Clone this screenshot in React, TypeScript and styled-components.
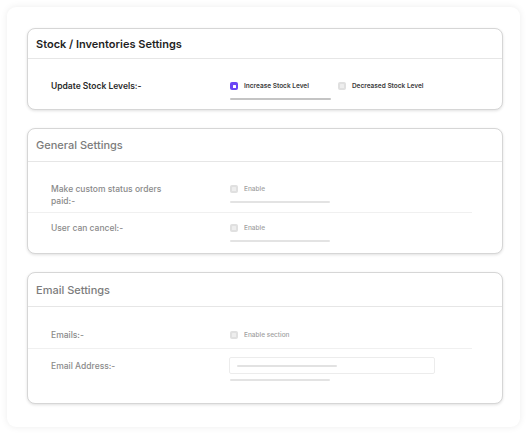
import React from "react";
import styled, { createGlobalStyle } from "styled-components";

const Global = createGlobalStyle`
  html, body { margin: 0; padding: 0; background: #ffffff; }
  body { font-family: Inter, "Noto Sans", sans-serif; }
  * { box-sizing: border-box; }
`;

const Page = styled.div`
  padding: 7px 10px 10px 7px;
`;

const OuterCard = styled.div`
  width: 513px;
  height: 420px;
  background: #ffffff;
  border-radius: 9px;
  box-shadow: 0 0 7px rgba(0, 0, 0, 0.08);
  padding: 21px 17px 0 20px;
  display: flex;
  flex-direction: column;
  gap: 18px;
`;

const Section = styled.section`
  border: 1px solid #d6d6d6;
  border-radius: 8px;
  background: #fff;
  box-shadow: 0 1px 3px rgba(0, 0, 0, 0.12);
  overflow: hidden;
`;

const Header = styled.div<{ $h: number; $muted?: boolean }>`
  height: ${(p) => p.$h}px;
  display: flex;
  align-items: center;
  padding-left: 8px;
  border-bottom: 1px solid #e6e6e6;
  font-size: 11px;
  font-weight: ${(p) => (p.$muted ? 500 : 600)};
  color: ${(p) => (p.$muted ? "#7c7c7c" : "#1f1f1f")};
`;

const Row = styled.div<{ $pt: number; $pb: number; $divider?: boolean }>`
  display: grid;
  grid-template-columns: 179px 1fr;
  align-items: start;
  padding: ${(p) => p.$pt}px 0 ${(p) => p.$pb}px 23px;
  margin-right: 30px;
  border-bottom: ${(p) => (p.$divider ? "1px solid #f0f0f0" : "none")};
`;

const Label = styled.div<{ $strong?: boolean; $offset?: number }>`
  font-size: 8.5px;
  line-height: 12px;
  margin-top: ${(p) => p.$offset ?? 0}px;
  font-weight: ${(p) => (p.$strong ? 600 : 500)};
  color: ${(p) => (p.$strong ? "#2a2a2a" : "#8a8a8a")};
  width: 120px;
`;

const Control = styled.div`
  display: flex;
  flex-direction: column;
  align-items: flex-start;
`;

const OptionLine = styled.div`
  display: flex;
  align-items: center;
  height: 12px;
  gap: 29px;
`;

const Option = styled.label<{ $strong?: boolean }>`
  display: flex;
  align-items: center;
  gap: 6px;
  font-size: 6.5px;
  font-weight: ${(p) => (p.$strong ? 600 : 500)};
  color: ${(p) => (p.$strong ? "#3a3a3a" : "#a0a0a0")};
`;

const Box = styled.span<{ $checked?: boolean }>`
  width: 8px;
  height: 8px;
  border-radius: 2px;
  background: ${(p) => (p.$checked ? "#6a45f5" : "#e0e0e0")};
  display: flex;
  align-items: center;
  justify-content: center;
  &::after {
    content: "";
    width: ${(p) => (p.$checked ? 3 : 4)}px;
    height: ${(p) => (p.$checked ? 3 : 4)}px;
    border-radius: 0.5px;
    background: ${(p) => (p.$checked ? "#ffffff" : "#eeeeee")};
  }
`;

const Bar = styled.div<{ $dark?: boolean; $mt: number; $w?: number }>`
  margin-top: ${(p) => p.$mt}px;
  width: ${(p) => p.$w ?? 101}px;
  height: 2px;
  border-radius: 1px;
  background: ${(p) => (p.$dark ? "#c4c4c4" : "#e3e3e3")};
`;

const Input = styled.div`
  width: 206px;
  height: 17px;
  border: 1px solid #ececec;
  border-radius: 2px;
  display: flex;
  align-items: center;
  padding-left: 7px;
  margin-left: -1px;
`;

const InputLine = styled.div`
  width: 100px;
  height: 2px;
  border-radius: 1px;
  background: #e2e2e2;
`;

export default function App() {
  return (
    <>
      <Global />
      <Page>
        <OuterCard>
          <Section>
            <Header $h={30}>Stock / Inventories Settings</Header>
            <Row $pt={21} $pb={9}>
              <Label $strong>Update Stock Levels:-</Label>
              <Control>
                <OptionLine>
                  <Option $strong>
                    <Box $checked />
                    Increase Stock Level
                  </Option>
                  <Option $strong>
                    <Box />
                    Decreased Stock Level
                  </Option>
                </OptionLine>
                <Bar $dark $mt={6} />
              </Control>
            </Row>
          </Section>

          <Section>
            <Header $h={33} $muted>General Settings</Header>
            <Row $pt={21} $pb={5} $divider>
              <Label>Make custom status orders paid:-</Label>
              <Control>
                <OptionLine>
                  <Option>
                    <Box />
                    Enable
                  </Option>
                </OptionLine>
                <Bar $mt={6} $w={100} />
              </Control>
            </Row>
            <Row $pt={9} $pb={11}>
              <Label>User can cancel:-</Label>
              <Control>
                <OptionLine>
                  <Option>
                    <Box />
                    Enable
                  </Option>
                </OptionLine>
                <Bar $mt={6} $w={100} />
              </Control>
            </Row>
          </Section>

          <Section>
            <Header $h={34} $muted>Email Settings</Header>
            <Row $pt={22} $pb={7} $divider>
              <Label>Emails:-</Label>
              <Control>
                <OptionLine>
                  <Option>
                    <Box />
                    Enable section
                  </Option>
                </OptionLine>
              </Control>
            </Row>
            <Row $pt={8} $pb={22}>
              <Label $offset={3}>Email Address:-</Label>
              <Control>
                <Input>
                  <InputLine />
                </Input>
                <Bar $mt={5} $w={100} />
              </Control>
            </Row>
          </Section>
        </OuterCard>
      </Page>
    </>
  );
}
